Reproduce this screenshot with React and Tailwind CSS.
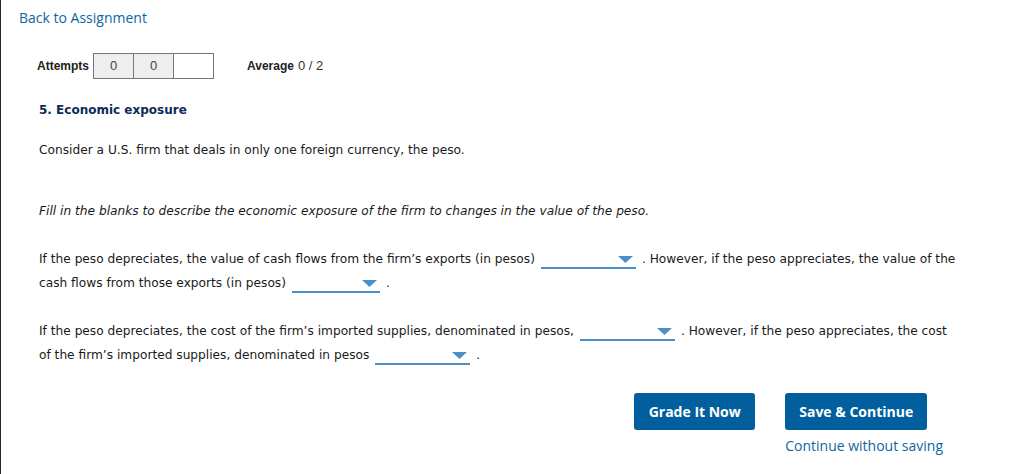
import React from "react";

function Drop({ w = "w-[95px]" }) {
  return (
    <span className={`inline-block relative ${w} h-[16px] border-b-2 border-[#4a8fc8] mx-[6px] align-[-6px]`}>
      <svg width="15" height="7" viewBox="0 0 15 7" className="absolute top-[3px] right-[3px]">
        <polygon points="0,0 15,0 7.5,7" fill="#4a8fc8" />
      </svg>
    </span>
  );
}

export default function App() {
  const body = { fontFamily: 'Verdana, "DejaVu Sans", sans-serif' };
  return (
    <div className="w-[1033px] h-[474px] bg-white border-l border-[#1f2a30] relative overflow-hidden">
      <div className="pl-[18px] pt-[5px]">
        <a className="text-[14px] text-[#0f65a0] leading-[20px]" style={{ fontFamily: '"Open Sans", sans-serif' }}>
          Back to Assignment
        </a>
      </div>

      <div className="flex items-center pl-[36px] mt-[24px]" style={{ fontFamily: '"Liberation Sans", Arial, sans-serif' }}>
        <span className="text-[12px] font-bold text-[#222] mr-[4px]">Attempts</span>
        <div className="flex h-[26px]">
          <div className="w-[41px] border border-[#777] bg-[#eeeeee] flex items-center justify-center text-[13px] text-[#444]">0</div>
          <div className="w-[40px] border border-l-0 border-[#777] bg-[#eeeeee] flex items-center justify-center text-[13px] text-[#444]">0</div>
          <div className="w-[40px] border border-l-0 border-[#777] bg-white"></div>
        </div>
        <span className="ml-[33px] text-[12px] font-bold text-[#222]">Average</span>
        <span className="ml-[4px] text-[13px] text-[#333]">0 / 2</span>
      </div>

      <div className="pl-[38px] pr-[60px] text-[#1a1a1a]" style={body}>
        <div className="mt-[23px] text-[12px] font-bold text-[#0d2b57] leading-[16px]">5. Economic exposure</div>
        <p className="mt-[24px] text-[12.2px] leading-[16px]">Consider a U.S. firm that deals in only one foreign currency, the peso.</p>
        <p className="mt-[45px] text-[12.2px] leading-[16px] italic">Fill in the blanks to describe the economic exposure of the firm to changes in the value of the peso.</p>
        <p className="mt-[28px] text-[12.2px] leading-[24px]">
          If the peso depreciates, the value of cash flows from the firm’s exports (in pesos)
          <Drop />. However, if the peso appreciates, the value of the
          <br />
          cash flows from those exports (in pesos)
          <Drop w="w-[88px]" />.
        </p>
        <p className="mt-[24px] text-[12.2px] leading-[24px]">
          If the peso depreciates, the cost of the firm’s imported supplies, denominated in pesos,
          <Drop />. However, if the peso appreciates, the cost
          <br />
          of the firm’s imported supplies, denominated in pesos
          <Drop />.
        </p>
      </div>

      <div className="flex justify-end pr-[90px] mt-[26px] gap-[30px]" style={{ fontFamily: '"Open Sans", sans-serif' }}>
        <div>
          <button className="h-[37px] w-[121px] rounded-[3px] bg-[#005f9c] text-white text-[14px] font-bold">Grade It Now</button>
        </div>
        <div className="flex flex-col items-start">
          <button className="h-[37px] w-[142px] rounded-[3px] bg-[#005f9c] text-white text-[14px] font-bold">Save &amp; Continue</button>
          <a className="mt-[6px] text-[14px] text-[#0f65a0] leading-[20px]">Continue without saving</a>
        </div>
      </div>
    </div>
  );
}
